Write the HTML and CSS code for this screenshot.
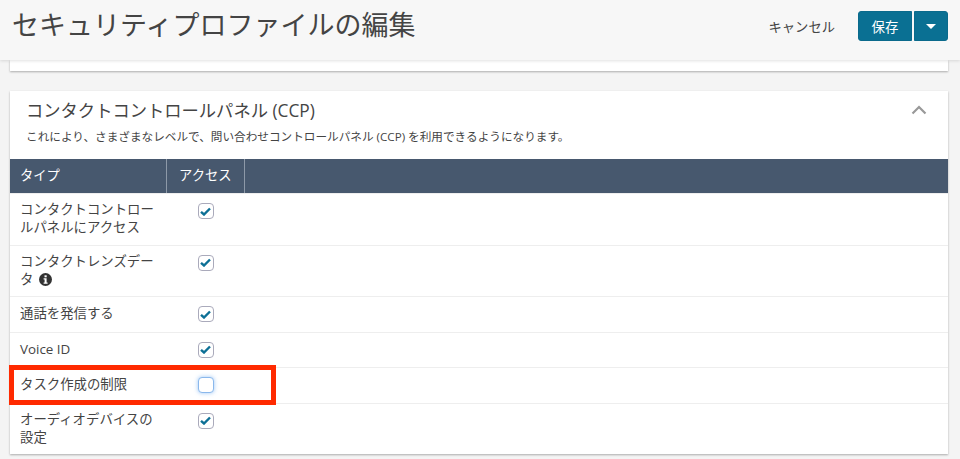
FILE: index.html
```html
<!DOCTYPE html>
<html lang="ja">
<head>
<meta charset="utf-8">
<title>セキュリティプロファイルの編集</title>
<link rel="stylesheet" href="styles.css">
</head>
<body>
<header class="page-header">
  <h1 class="page-title">セキュリティプロファイルの編集</h1>
  <div class="actions">
    <button class="cancel" type="button">キャンセル</button>
    <div class="split">
      <button class="save" type="button">保存</button>
      <button class="caret-btn" type="button" aria-label="その他"><svg width="10" height="5" viewBox="0 0 10 5"><path d="M0 0h10L5 5z" fill="#fff"/></svg></button>
    </div>
  </div>
</header>
<main class="content">
  <div class="stub-card"></div>
  <section class="panel">
    <div class="panel-head">
      <div>
        <h2 class="panel-title">コンタクトコントロールパネル (CCP)</h2>
        <p class="panel-desc">これにより、さまざまなレベルで、問い合わせコントロールパネル (CCP) を利用できるようになります。</p>
      </div>
      <svg class="chevron" width="16" height="10" viewBox="0 0 16 10"><path d="M1.5 8.500L8 2l6.500 6.500" fill="none" stroke="#999" stroke-width="2.200"/></svg>
    </div>
    <div class="thead">
      <div class="th th-type">タイプ</div>
      <div class="th th-access">アクセス</div>
      <div class="th th-rest"></div>
    </div>
    <div class="row tall"><div class="cell-type">コンタクトコントロールパネルにアクセス</div><div class="cell-check"><span class="box"><svg width="11" height="9" viewBox="0 0 11 9"><path d="M1 4.800L4 7.500 10 1.500" fill="none" stroke="#0d7096" stroke-width="2.400"/></svg></span></div></div>
    <div class="row tall"><div class="cell-type">コンタクトレンズデータ <svg class="info" width="13" height="13" viewBox="0 0 13 13"><circle cx="6.500" cy="6.500" r="6.500" fill="#333"/><rect x="5.500" y="2.300" width="2.200" height="2" fill="#fff"/><path d="M4.600 5.300h3v4.200h1v1.300H4.600V9.500h1V6.600h-1z" fill="#fff"/></svg></div><div class="cell-check"><span class="box"><svg width="11" height="9" viewBox="0 0 11 9"><path d="M1 4.800L4 7.500 10 1.500" fill="none" stroke="#0d7096" stroke-width="2.400"/></svg></span></div></div>
    <div class="row"><div class="cell-type">通話を発信する</div><div class="cell-check"><span class="box"><svg width="11" height="9" viewBox="0 0 11 9"><path d="M1 4.800L4 7.500 10 1.500" fill="none" stroke="#0d7096" stroke-width="2.400"/></svg></span></div></div>
    <div class="row"><div class="cell-type">Voice ID</div><div class="cell-check"><span class="box"><svg width="11" height="9" viewBox="0 0 11 9"><path d="M1 4.800L4 7.500 10 1.500" fill="none" stroke="#0d7096" stroke-width="2.400"/></svg></span></div></div>
    <div class="row"><div class="cell-type">タスク作成の制限</div><div class="cell-check"><span class="box focus"></span></div></div>
    <div class="row tall last"><div class="cell-type">オーディオデバイスの設定</div><div class="cell-check"><span class="box"><svg width="11" height="9" viewBox="0 0 11 9"><path d="M1 4.800L4 7.500 10 1.500" fill="none" stroke="#0d7096" stroke-width="2.400"/></svg></span></div></div>
    <div class="highlight"></div>
  </section>
</main>
</body>
</html>
```
FILE: styles.css
```css
* { box-sizing: border-box; }
html, body { margin: 0; padding: 0; height: 100%; }
body {
  width: 960px;
  height: 459px;
  overflow: hidden;
  background: #f4f4f4;
  color: #444;
  font-family: "Open Sans", "Noto Sans CJK JP", sans-serif;
  display: flex;
  flex-direction: column;
}
.page-header {
  flex: 0 0 60px;
  height: 60px;
  background: #f7f7f7;
  box-shadow: 0 1px 3px rgba(0,0,0,.12);
  position: relative;
  z-index: 2;
  display: flex;
  justify-content: space-between;
  align-items: flex-start;
  padding: 0 12px 0 12px;
}
.page-title {
  margin: 5px 0 0;
  font-size: 27px;
  line-height: 40px;
  font-weight: 400;
  color: #444;
}
.actions {
  display: flex;
  align-items: center;
  gap: 23px;
  padding-top: 11px;
}
.cancel {
  background: none;
  border: 0;
  padding: 0;
  font: inherit;
  font-size: 13.300px;
  color: #444;
}
.split { display: flex; gap: 2px; }
.save, .caret-btn {
  height: 30px;
  background: #0a7093;
  border: 1px solid #0a6a8c;
  color: #fff;
  font: inherit;
  padding: 0;
  display: flex;
  align-items: center;
  justify-content: center;
}
.save { width: 54px; font-size: 13.400px; border-radius: 3px 0 0 3px; }
.caret-btn { width: 34px; border-radius: 0 3px 3px 0; }
.content {
  flex: 1;
  padding: 0 12px 0 10px;
  min-height: 0;
}
.stub-card {
  height: 11px;
  background: #fff;
  box-shadow: 0 1px 2px rgba(0,0,0,.3);
  margin-bottom: 20px;
}
.panel {
  position: relative;
  background: #fff;
  box-shadow: 0 1px 2px rgba(0,0,0,.3);
}
.panel-head {
  height: 68px;
  padding: 8px 16px 0 16px;
  display: flex;
  justify-content: space-between;
  align-items: flex-start;
}
.panel-title {
  margin: 0;
  font-size: 17.300px;
  line-height: 24px;
  font-weight: 400;
  color: #444;
}
.panel-desc {
  margin: 6px 0 0;
  font-size: 11.630px;
  line-height: 16px;
  color: #444;
}
.chevron { margin-top: 6px; margin-right: 5px; }
.thead {
  display: flex;
  height: 34px;
  background: #47586e;
  color: #fff;
  font-size: 13.300px;
}
.th {
  display: flex;
  align-items: center;
  padding-left: 10px;
  padding-bottom: 3px;
  border-right: 1px solid #8d99a8;
}
.th-type { width: 157px; }
.th-access { width: 78px; padding-left: 12px; }
.th-rest { flex: 1; border-right: 0; }
.row {
  display: flex;
  height: 35.500px;
  border-top: 1px solid #eee;
  font-size: 13.400px;
  line-height: 18px;
}
.row:first-of-type { border-top: 0; }
.row.tall { height: 51.500px; }
.cell-type {
  width: 157px;
  padding: 7px 10px 0 10px;
  color: #444;
}
.row.tall .cell-type { padding-top: 6px; }
.cell-check {
  padding: 9px 0 0 30.500px;
}
.box {
  display: flex;
  align-items: center;
  justify-content: center;
  width: 16px;
  height: 16px;
  background: #fff;
  border: 1px solid #aab;
  border-radius: 4px;
}
.box.focus {
  border-color: #8ab8ec;
  box-shadow: 0 0 4px rgba(90,160,240,.6);
}
.info { vertical-align: -2px; margin-left: 2px; }
.highlight {
  position: absolute;
  left: -1px;
  top: 274px;
  width: 267px;
  height: 40px;
  border: 5px solid #ff2a00;
  pointer-events: none;
}
```
